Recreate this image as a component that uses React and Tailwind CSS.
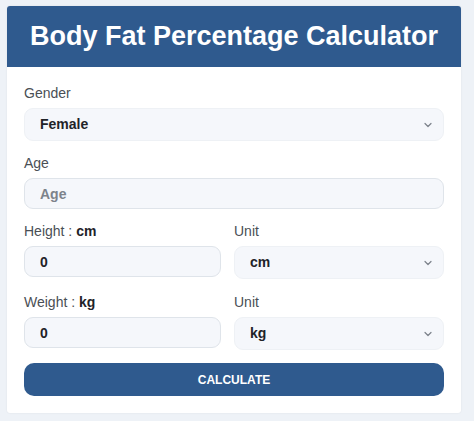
import { useState } from "react";

function Chevron() {
  return (
    <svg
      className="pointer-events-none absolute right-[11px] top-1/2 -translate-y-1/2"
      width="10"
      height="10"
      viewBox="0 0 10 10"
      fill="none"
      stroke="#7b818a"
      strokeWidth="1.2"
      strokeLinecap="round"
      strokeLinejoin="round"
    >
      <path d="M2 3.5 L5 6.5 L8 3.5" />
    </svg>
  );
}

function SelectBox({ value, onChange, options }) {
  return (
    <div className="relative">
      <select
        value={value}
        onChange={onChange}
        className="w-full h-[33px] appearance-none rounded-[9px] border border-[#eef1f5] bg-[#f5f7fb] pl-[15px] pr-8 text-[14px] font-bold text-[#1f2328] outline-none"
      >
        {options.map((o) => (
          <option key={o} value={o}>
            {o}
          </option>
        ))}
      </select>
      <Chevron />
    </div>
  );
}

export default function App() {
  const [form, setForm] = useState({
    gender: "Female",
    age: "",
    height: "0",
    heightUnit: "cm",
    weight: "0",
    weightUnit: "kg",
  });

  const handleChange = (name) => (e) => setForm({ ...form, [name]: e.target.value });

  const inputCls =
    "w-full h-[31px] rounded-[9px] border border-[#dfe4ea] bg-[#f5f7fb] px-[15px] text-[14px] font-bold text-[#1f2328] placeholder:text-[#7d838b] outline-none";
  const labelCls = "block h-[20px] leading-[20px] text-[14px] text-[#4a4f55] mb-[5px]";

  return (
    <div className="min-h-[421px] w-[474px] bg-[#eef2f7] pt-[6px] pl-[7px] font-['Liberation_Sans',Arial,sans-serif]">
      <div className="w-[454px] overflow-hidden rounded-[3px] bg-white shadow-[0_0_2px_rgba(0,0,0,0.08)]">
        <div className="flex h-[61px] items-center justify-center bg-[#2f5a8e]">
          <h1 className="text-[27px] font-bold leading-none text-white">Body Fat Percentage Calculator</h1>
        </div>

        <form className="px-[17px] pt-[16px] pb-[17px]" onSubmit={(e) => e.preventDefault()}>
          <label className={labelCls}>Gender</label>
          <SelectBox value={form.gender} onChange={handleChange("gender")} options={["Female", "Male"]} />

          <label className={`${labelCls} mt-[12px]`}>Age</label>
          <input
            className={inputCls}
            placeholder="Age"
            value={form.age}
            onChange={handleChange("age")}
          />

          <div className="mt-[12px] grid grid-cols-[197px_1fr] gap-x-[13px]">
            <div>
              <label className={labelCls}>
                Height : <span className="font-bold text-[#1f2328]">{form.heightUnit}</span>
              </label>
              <input className={inputCls} value={form.height} onChange={handleChange("height")} />
            </div>
            <div>
              <label className={labelCls}>Unit</label>
              <SelectBox value={form.heightUnit} onChange={handleChange("heightUnit")} options={["cm", "in"]} />
            </div>
          </div>

          <div className="mt-[13px] grid grid-cols-[197px_1fr] gap-x-[13px]">
            <div>
              <label className={labelCls}>
                Weight : <span className="font-bold text-[#1f2328]">{form.weightUnit}</span>
              </label>
              <input className={inputCls} value={form.weight} onChange={handleChange("weight")} />
            </div>
            <div>
              <label className={labelCls}>Unit</label>
              <SelectBox value={form.weightUnit} onChange={handleChange("weightUnit")} options={["kg", "lb"]} />
            </div>
          </div>

          <button
            type="submit"
            className="mt-[13px] h-[33px] w-full rounded-[10px] bg-[#2f5a8e] text-[12px] font-bold text-white"
          >
            CALCULATE
          </button>
        </form>
      </div>
    </div>
  );
}
